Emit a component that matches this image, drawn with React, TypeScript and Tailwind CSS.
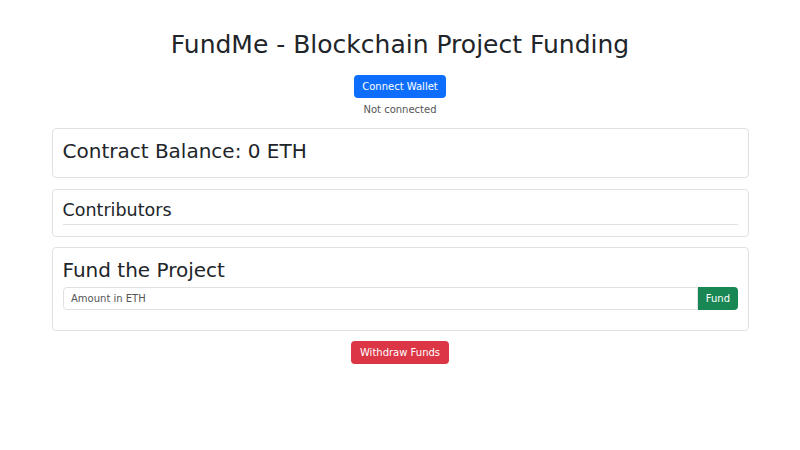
export default function App() {
  return (
    <div className="h-screen overflow-hidden bg-white text-[#212529] [font-family:'DejaVu_Sans',sans-serif]">
      <div className="mx-auto w-[712px] px-[7.5px] pt-[30px] text-center">
        <h1 className="text-[25px] leading-[30px] font-normal">FundMe - Blockchain Project Funding</h1>
        <button className="mt-[15px] h-[23px] rounded-[4px] bg-[#0d6efd] px-[8.5px] text-[10px] leading-[15px] text-white">
          Connect Wallet
        </button>
        <p className="mt-[4px] text-[10px] leading-[15px] text-[#555]">Not connected</p>

        <div className="mt-[11px] rounded-[4px] border border-[#dee2e6] px-[10px] pt-[10px] pb-[10px] text-left">
          <h2 className="mb-[3.5px] text-[20px] leading-[24px]">Contract Balance: 0 ETH</h2>
        </div>

        <div className="mt-[11px] rounded-[4px] border border-[#dee2e6] px-[10px] pt-[10px] pb-[11px] text-left">
          <h3 className="text-[17.5px] leading-[21px]">Contributors</h3>
          <div className="mt-[3px] border-t border-[#dee2e6]" />
        </div>

        <div className="mt-[10px] rounded-[4px] border border-[#dee2e6] p-[10px] text-left">
          <h2 className="mb-[5px] text-[20px] leading-[24px]">Fund the Project</h2>
          <div className="mb-[10px] flex">
            <input
              type="text"
              placeholder="Amount in ETH"
              className="h-[23px] flex-1 rounded-l-[4px] border border-[#dee2e6] px-[7.5px] text-[10px] text-[#212529] placeholder:text-[#555] outline-none"
            />
            <button className="h-[23px] rounded-r-[4px] bg-[#198754] px-[7.5px] text-[10px] text-white">Fund</button>
          </div>
        </div>

        <button className="mt-[10px] h-[23px] rounded-[4px] bg-[#dc3545] px-[8.5px] text-[10px] leading-[15px] text-white">
          Withdraw Funds
        </button>
      </div>
    </div>
  );
}
